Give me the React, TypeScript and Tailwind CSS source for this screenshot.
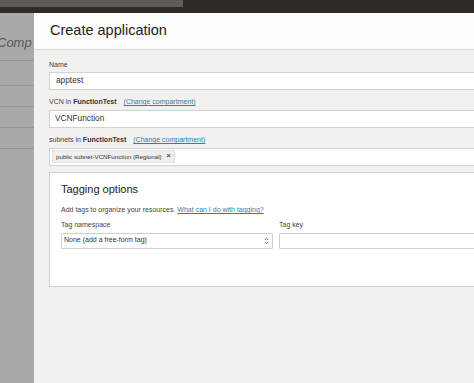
export default function App() {
  return (
    <div className="w-[474px] h-[383px] overflow-hidden flex flex-col bg-[#f2f1ef] font-['Liberation_Sans',Arial,sans-serif] text-[#333]">
      {/* top console bar */}
      <div className="h-[13px] shrink-0 bg-[#2f2b28]">
        <div className="w-[183px] h-[7px] bg-[#5f5b59]" />
      </div>

      <div className="flex flex-1 min-h-0">
        {/* page behind the panel */}
        <div className="w-[34px] shrink-0 bg-[#a9a9a9] overflow-hidden">
          <div className="h-[48px] border-b border-[#959595] pt-[22px]">
            <div className="-ml-[3px] text-[13px] leading-[15px] italic text-[#5a5a5a] whitespace-nowrap">Comp</div>
          </div>
          <div className="h-[25px] border-b border-[#959595]" />
          <div className="h-[21px] border-b border-[#959595]" />
          <div className="h-[21px] border-b border-[#959595]" />
          <div className="h-[21px] border-b border-[#959595]" />
        </div>

        {/* create application panel */}
        <div className="flex-1 min-w-0 flex flex-col overflow-hidden">
          <div className="h-[37px] shrink-0 bg-[#fdfdfd] border-b border-[#dcdcdc] flex items-center px-[16px]">
            <h1 className="text-[14.5px] text-[#222] whitespace-nowrap">Create application</h1>
          </div>

          <div className="flex-1 pl-[15px] pt-[11px]">
            <div className="w-[460px]">
              <div className="text-[7px] leading-[8px] text-[#444] mb-[2.5px]">Name</div>
              <div className="h-[18px] bg-white border border-[#d3d3d3] flex items-center pl-[6px] text-[8.3px] text-[#333]">
                apptest
              </div>

              <div className="mt-[8.5px] text-[7px] leading-[8px] text-[#444] mb-[3.5px] whitespace-nowrap">
                VCN in <b className="text-[#333]">FunctionTest</b>
                <a className="ml-[7px] text-[#3b7ca3] underline">(Change compartment)</a>
              </div>
              <div className="h-[18px] bg-white border border-[#d3d3d3] flex items-center pl-[5px] text-[8.3px] text-[#333]">
                VCNFunction
              </div>

              <div className="mt-[8.5px] text-[7px] leading-[8px] text-[#444] mb-[3.5px] whitespace-nowrap">
                subnets in <b className="text-[#333]">FunctionTest</b>
                <a className="ml-[7px] text-[#3b7ca3] underline">(Change compartment)</a>
              </div>
              <div className="h-[18px] bg-white border border-[#d3d3d3] flex items-center pl-[2px]">
                <span className="h-[13px] flex items-center gap-[5px] bg-[#efefef] border border-[#e2e2e2] px-[3px] text-[6.2px] text-[#333] whitespace-nowrap">
                  public subnet-VCNFunction (Regional)
                  <span className="text-[7px] font-bold text-[#444]">×</span>
                </span>
              </div>

              <div className="mt-[6px] h-[115px] bg-white border border-[#cfcfcf] pl-[11px] pt-[10px]">
                <h2 className="text-[11px] leading-[13px] text-[#222] whitespace-nowrap">Tagging options</h2>
                <p className="mt-[10.5px] text-[7px] leading-[8px] text-[#444] whitespace-nowrap">
                  Add tags to organize your resources.{' '}
                  <a className="text-[#3b7ca3] underline">What can I do with tagging?</a>
                </p>
                <div className="mt-[7px] flex gap-[6px]">
                  <div className="w-[212px] shrink-0">
                    <div className="text-[7px] leading-[8px] text-[#444] mb-[3.5px]">Tag namespace</div>
                    <div className="h-[16px] bg-white border border-[#cfcfcf] rounded-[1px] flex items-center justify-between pl-[2px] pr-[3px] text-[7px] text-[#333]">
                      <span className="whitespace-nowrap">None (add a free-form tag)</span>
                      <svg width="5" height="8" viewBox="0 0 5 8" fill="none" stroke="#666" strokeWidth="0.9">
                        <path d="M0.8 3 L2.5 1.2 L4.2 3" />
                        <path d="M0.8 5 L2.5 6.8 L4.2 5" />
                      </svg>
                    </div>
                  </div>
                  <div className="flex-1">
                    <div className="text-[7px] leading-[8px] text-[#444] mb-[3.5px]">Tag key</div>
                    <div className="h-[16px] bg-white border border-[#cfcfcf] rounded-[1px]" />
                  </div>
                </div>
              </div>
            </div>
          </div>
        </div>
      </div>
    </div>
  );
}
